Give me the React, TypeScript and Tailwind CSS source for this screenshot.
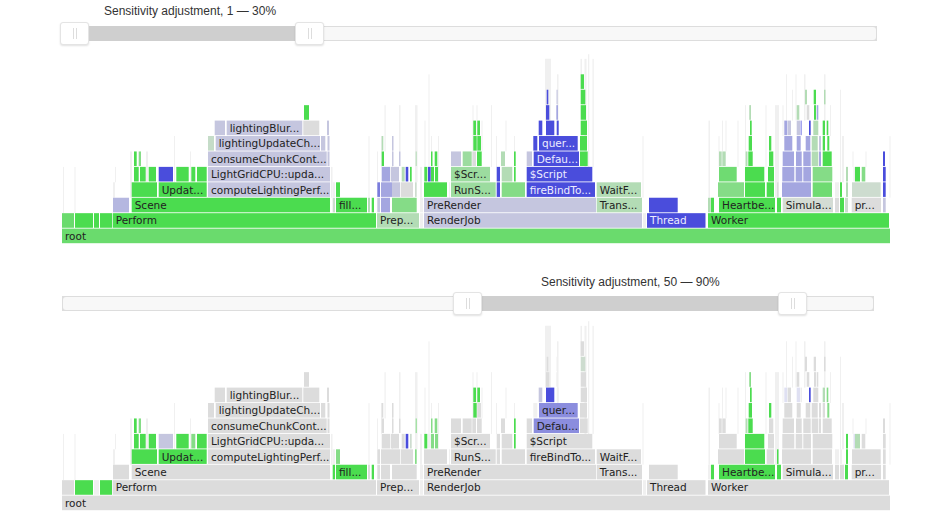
const G = '#4bdc4f';
const M = '#6adb6d';
const L = '#85dc87';
const P = '#9cdc9f';
const Q = '#b3dcb5';
const R = '#cddccf';
const X = '#dcdcdc';
const V = '#c5c6df';
const W = '#a4a6e0';
const B = '#4a4ddc';
const N = '#8b8dde';
const T = '#f0f0f0';

type Frame = [number, number, number, string, string, string?];

// level, x0, x1, colour in the first chart, colour in the second, label
const frames: Frame[] = [
  [0, 62, 890, M, X, 'root'],

  [1, 62, 74, M, X],
  [1, 75, 93, G, G],
  [1, 94, 99, G, T],
  [1, 100, 112, G, G],
  [1, 112.7, 376, G, X, 'Perform'],
  [1, 377, 419, Q, X, 'Prep...'],
  [1, 420, 423, T, T],
  [1, 424, 642, V, X, 'RenderJob'],
  [1, 643, 646, T, T],
  [1, 647, 705.5, B, X, 'Thread'],
  [1, 708, 889, G, X, 'Worker'],

  [2, 113, 129, '#b5b7e0', X],
  [2, 131.7, 330, G, X, 'Scene'],
  [2, 332.7, 335, R, G],
  [2, 336, 367, G, G, 'fill...'],
  [2, 368, 370, Q, X],
  [2, 371.7, 374, G, G],
  [2, 377.3, 380, V, X],
  [2, 381, 390, W, X],
  [2, 392, 416.7, L, X],
  [2, 420, 423, T, T],
  [2, 424, 596, V, X, 'PreRender'],
  [2, 596.7, 642, Q, X, 'Trans...'],
  [2, 649, 677.7, B, X],
  [2, 708, 710.7, Q, T],
  [2, 711, 714, G, G],
  [2, 719, 775, G, G, 'Heartbe...'],
  [2, 777, 781, G, G],
  [2, 782.7, 833, '#d4dcd4', X, 'Simula...'],
  [2, 835, 839, X, X],
  [2, 840, 844, G, X],
  [2, 845, 848, R, G],
  [2, 851.7, 881, X, X, 'pr...'],
  [2, 883, 885.7, V, X],

  [3, 131.7, 157, G, G],
  [3, 158.7, 206.7, G, G, 'Updat...'],
  [3, 208, 330, V, X, 'computeLightingPerf...'],
  [3, 332.7, 335, T, T],
  [3, 336, 340, G, L],
  [3, 377.3, 380, '#7a7cdc', X],
  [3, 381, 392, W, X],
  [3, 392, 400, V, X],
  [3, 400.7, 413, X, X],
  [3, 415, 416.7, R, L],
  [3, 424, 447, G, X],
  [3, 451, 495.7, P, X, 'RunS...'],
  [3, 496.7, 500, B, X],
  [3, 501.7, 525, L, X],
  [3, 526.7, 595, B, X, 'fireBindTo...'],
  [3, 596.7, 641, Q, X, 'WaitF...'],
  [3, 718, 744, L, X],
  [3, 745, 765, G, G],
  [3, 766.7, 774, G, X],
  [3, 777, 778.5, X, G],
  [3, 782, 811, W, X],
  [3, 812.7, 832, '#6fdb72', X],
  [3, 835, 839, T, T],
  [3, 840, 842, G, T],
  [3, 846, 848, Q, G],
  [3, 852, 880.7, R, X],
  [3, 883, 885.7, B, X],

  [4, 134, 138.7, G, G],
  [4, 140, 145.7, G, G],
  [4, 148.7, 156, G, G],
  [4, 158.7, 173, B, V],
  [4, 176.3, 188.7, G, G],
  [4, 191.3, 195.3, G, L],
  [4, 197, 206.7, G, G],
  [4, 208, 330, V, X, 'LightGridCPU::upda...'],
  [4, 381.7, 390, W, X],
  [4, 390.7, 399, V, X],
  [4, 401.7, 404.7, Q, X],
  [4, 405.7, 408.3, B, B],
  [4, 410, 411.7, G, R],
  [4, 424.3, 427.3, G, G],
  [4, 428, 430.7, B, T],
  [4, 431, 434, G, L],
  [4, 435, 438, G, L],
  [4, 451, 490, P, X, '$Scr...'],
  [4, 496.7, 500, B, X],
  [4, 501.7, 512.3, Q, X],
  [4, 514, 515.7, G, G],
  [4, 526.7, 592.3, B, X, '$Script'],
  [4, 719, 736.7, '#6fdb72', X],
  [4, 745, 764.3, G, G],
  [4, 768, 774, G, X],
  [4, 782.3, 794.3, W, X],
  [4, 795.7, 802.3, W, X],
  [4, 803.3, 811, W, X],
  [4, 812.7, 832.3, L, X],
  [4, 846, 848, Q, G],
  [4, 853.5, 855, T, '#dfe0f2'],
  [4, 855, 860, G, Q],
  [4, 861.7, 865.3, L, X],
  [4, 883, 885.7, B, X],

  [5, 134, 136.7, G, G],
  [5, 138.7, 141, L, L],
  [5, 208, 326.7, V, X, 'consumeChunkCont...'],
  [5, 327.5, 329.5, V, X],
  [5, 381.7, 384, G, X],
  [5, 392, 393.5, V, X],
  [5, 399, 400.5, V, X],
  [5, 415.7, 416.7, Q, L],
  [5, 431, 432.5, G, L],
  [5, 434.7, 437.3, G, L],
  [5, 451, 461, V, X],
  [5, 462.7, 471.7, P, X],
  [5, 472.3, 476, X, X],
  [5, 477, 481.7, G, X],
  [5, 501, 505, Q, X],
  [5, 514, 515.7, G, G],
  [5, 526.7, 532, V, X],
  [5, 533.7, 579, B, N, 'Defau...'],
  [5, 580, 587.7, G, X],
  [5, 719, 721.7, Q, X],
  [5, 722.3, 725.7, Q, X],
  [5, 745.5, 747.5, Q, Q],
  [5, 748.3, 752.7, G, G],
  [5, 769, 773.3, G, X],
  [5, 782.7, 794, W, X],
  [5, 796, 801.7, W, X],
  [5, 803.3, 810.7, W, X],
  [5, 811.7, 818.3, Q, X],
  [5, 819, 821, W, X],
  [5, 822.7, 831.7, G, X],
  [5, 883, 885, B, X],

  [6, 208, 214, '#c5dcc8', X],
  [6, 215.7, 320, V, X, 'lightingUpdateCh...'],
  [6, 321, 325.3, V, X],
  [6, 327.5, 329.5, V, X],
  [6, 381.7, 383.3, Q, X],
  [6, 392, 393.5, V, X],
  [6, 473.3, 476.7, G, G],
  [6, 477.3, 481, G, X],
  [6, 533.3, 537.3, B, T],
  [6, 539, 577.7, B, N, 'quer...'],
  [6, 580, 587, G, X],
  [6, 748.7, 752, G, G],
  [6, 769, 771.3, G, G],
  [6, 784.3, 792.3, W, X],
  [6, 796.7, 800.7, W, X],
  [6, 805.7, 810.3, W, X],
  [6, 811.7, 817.7, Q, X],
  [6, 819, 821, V, X],
  [6, 822.7, 825, G, X],
  [6, 827.3, 829.3, G, L],

  [7, 214.7, 225, V, X],
  [7, 226.7, 302.3, V, X, 'lightingBlur...'],
  [7, 303.3, 319.3, X, X],
  [7, 327, 329, V, X],
  [7, 473.3, 476, G, G],
  [7, 477.3, 480, G, G],
  [7, 538.7, 542.3, B, V],
  [7, 546, 554.3, B, B],
  [7, 556.7, 558.7, B, T],
  [7, 580.7, 587, G, X],
  [7, 750, 751.7, G, G],
  [7, 784.3, 787.3, W, '#dfe0f2'],
  [7, 787.7, 791, V, X],
  [7, 796.7, 800, V, '#dfe0f2'],
  [7, 800.7, 801.5, B, X],
  [7, 809, 810.7, B, B],
  [7, 813.3, 818.3, Q, X],
  [7, 822.7, 825, G, Q],
  [7, 826.7, 828.3, G, L],

  [8, 304, 309, G, X],
  [8, 546, 549.3, B, X],
  [8, 556.3, 558, W, T],
  [8, 580.7, 586, G, X],
  [8, 749.3, 751, Q, L],
  [8, 796.7, 799.3, Q, X],
  [8, 806.7, 809.3, X, X],
  [8, 814, 816, G, X],
  [8, 816.7, 818.3, W, X],

  [9, 546.7, 548.3, B, X],
  [9, 556.5, 557.7, V, T],
  [9, 580.7, 585.3, G, R],
  [9, 805, 807, Q, X],
  [9, 813.7, 816, G, X],
  [9, 824, 825.5, Q, X],

  [10, 545.5, 550.5, T, T],
  [10, 580.7, 584, G, X],

  [11, 545.5, 551, T, T],
];

// thin pale stripes: x, width, top level, bottom level
const stripes: [number, number, number, number][] = [
  [63, 1, 4, 2], [74.5, 1, 4, 2], [113, 2, 3, 3], [115, 1, 4, 4], [130, 2, 5, 3],
  [146, 2, 5, 4], [174, 1, 6, 4], [190, 1, 5, 4], [331, 1.5, 4, 3], [368.5, 1, 6, 3],
  [377, 1, 5, 4], [381, 1, 6, 5], [384.5, 1.2, 8, 6], [392, 1, 6, 4], [399, 1.5, 8, 6],
  [415, 2.5, 8, 4], [420, 2, 4, 3], [424.5, 1, 7, 5], [428.5, 1, 10, 5], [431, 1, 6, 6],
  [438, 1, 6, 4], [449, 1, 3, 3], [472.5, 1, 8, 6], [476.5, 1, 8, 6], [481.5, 1, 7, 6],
  [491, 1, 8, 5], [496, 1, 6, 5], [505.5, 1, 7, 6], [514, 1, 6, 6], [545, 6, 11, 8],
  [557, 1.5, 10, 7], [580.5, 1.5, 11, 10], [584.5, 2, 11, 5], [588, 1.3, 11.3, 5],
  [592.5, 1.3, 11, 5], [642.5, 1, 6, 3], [708.5, 1.5, 7, 3], [718.5, 1, 6, 5],
  [722, 1, 7, 6], [725.5, 1, 7, 6], [737.5, 1, 7, 5], [745, 1, 8, 6], [749.5, 1.5, 8, 8],
  [765.5, 1, 8, 5], [775, 4, 8, 3], [782.5, 1, 8, 7], [786, 1, 10, 8], [792, 1, 9, 8],
  [795.5, 1, 10, 8], [804, 1.5, 10, 8], [824, 1.5, 10, 8], [830, 1, 8, 7], [840, 1, 9, 4],
  [842, 2, 6, 4], [852.5, 1, 5, 5], [865.5, 1, 5, 5], [889.5, 1, 6, 3],
];

const PITCH = 15.43;
const ROOT_Y = 178.6;

function Chart({ second }: { second: boolean }) {
  return (
    <svg width={934} height={196} className="block">
      {stripes.map(([x, w, top, bottom], i) => (
        <rect
          key={i}
          x={x}
          y={ROOT_Y - top * PITCH}
          width={w}
          height={(top - bottom + 1) * PITCH}
          fill={T}
        />
      ))}
      {frames.map(([level, x0, x1, first, other, label], i) => {
        const fill = second ? other : first;
        const y = ROOT_Y - level * PITCH;
        return (
          <g key={i}>
            <rect x={x0} y={y} width={x1 - x0} height={14.6} fill={fill} />
            {label && (
              <text
                x={x0 + 3}
                y={y + 11.2}
                fontSize={10.5}
                fill={fill === B ? '#ececff' : '#222222'}
                className="font-['DejaVu_Sans',sans-serif]"
              >
                {label}
              </text>
            )}
          </g>
        );
      })}
    </svg>
  );
}

function Handle() {
  return (
    <div className="z-10 flex h-[23px] w-[29px] shrink-0 items-center justify-center gap-[2px] rounded-[3px] border border-[#e4e4e4] bg-white shadow-[0_1px_2px_rgba(0,0,0,0.12)]">
      <span className="h-[11px] w-px bg-[#dddddd]" />
      <span className="h-[11px] w-px bg-[#dddddd]" />
    </div>
  );
}

export default function App() {
  return (
    <div className="h-[526px] w-[934px] overflow-hidden bg-white font-['Liberation_Sans',sans-serif] text-[12px] text-[#333333]">
      <p className="h-[22px] pl-[104px] pt-[4px] leading-[14px]">Sensitivity adjustment, 1 — 30%</p>
      <div className="ml-[62px] flex h-[23px] w-[815px] items-center rounded-[3px] bg-[linear-gradient(#dddddd_0,#dddddd_100%)] bg-[length:100%_15px] bg-center bg-no-repeat">
        <div className="-ml-[2px]"><Handle /></div>
        <div className="h-[15px] w-[206px] bg-[#cfcfcf]" />
        <Handle />
        <div className="mr-px h-[13px] flex-1 rounded-r-[3px] bg-[#f8f8f8]" />
      </div>
      <div className="pt-[5px]">
        <Chart second={false} />
      </div>

      <p className="h-[43px] pl-[541px] pt-[29px] leading-[14px]">Sensitivity adjustment, 50 — 90%</p>
      <div className="ml-[62px] mt-[3px] flex h-[23px] w-[812px] items-center rounded-[3px] bg-[linear-gradient(#dddddd_0,#dddddd_100%)] bg-[length:100%_15px] bg-center bg-no-repeat">
        <div className="ml-px h-[13px] w-[390px] rounded-l-[3px] bg-[#f8f8f8]" />
        <Handle />
        <div className="h-[15px] w-[296px] bg-[#cfcfcf]" />
        <Handle />
        <div className="mr-px h-[13px] flex-1 rounded-r-[3px] bg-[#f8f8f8]" />
      </div>
      <div className="pt-[2px]">
        <Chart second />
      </div>
    </div>
  );
}
